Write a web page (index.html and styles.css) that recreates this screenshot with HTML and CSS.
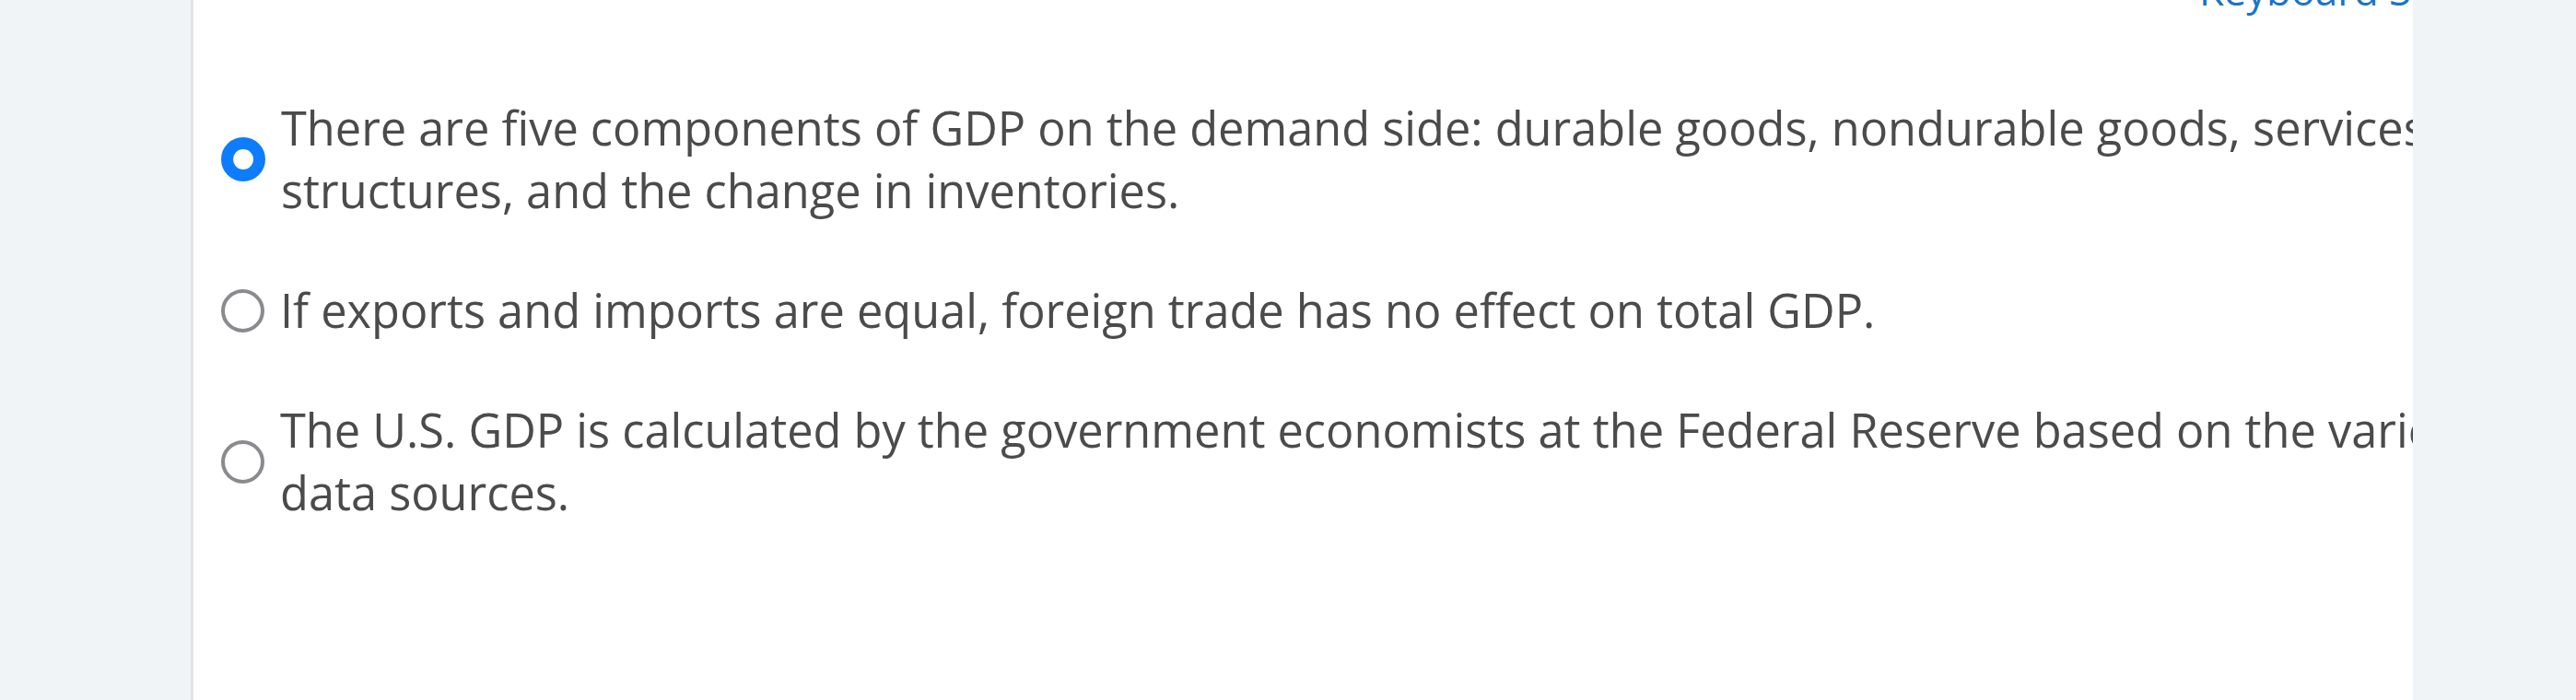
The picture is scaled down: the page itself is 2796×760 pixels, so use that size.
FILE: index.html
```html
<!DOCTYPE html>
<html lang="en">
<head>
<meta charset="utf-8">
<title>Question</title>
<link rel="stylesheet" href="styles.css">
</head>
<body>
<div class="page">
  <div class="side"></div>
  <main class="panel">
    <div class="topbar"><a class="kbd-link" href="#">Keyboard Shortcuts</a></div>
    <div class="options">
      <label class="option">
        <span class="radio radio-checked"></span>
        <span class="option-text">There are five components of GDP on the demand side: durable goods, nondurable goods, services, structures, and the change in inventories.</span>
      </label>
      <label class="option">
        <span class="radio"></span>
        <span class="option-text">If exports and imports are equal, foreign trade has no effect on total GDP.</span>
      </label>
      <label class="option">
        <span class="radio"></span>
        <span class="option-text">The U.S. GDP is calculated by the government economists at the Federal Reserve based on the variety of data sources.</span>
      </label>
    </div>
  </main>
  <div class="side side-right"></div>
</div>
</body>
</html>
```

FILE: styles.css
```css
html, body {
  margin: 0;
  padding: 0;
  background: #f1f4f7;
  height: 100%;
}

body {
  font-family: "Open Sans", "Noto Sans", "Liberation Sans", sans-serif;
  overflow: hidden;
}

.page {
  display: flex;
  height: 760px;
}

.side {
  width: 207px;
  flex: none;
  background: #f1f4f7;
}

.side-right {
  flex: 1;
}

.panel {
  width: 2409px;
  flex: none;
  background: #ffffff;
  border-left: 3px solid #e3e4e6;
  overflow: hidden;
}

.topbar {
  height: 60px;
  margin-top: -41px;
  line-height: 60px;
  padding-left: 2177px;
  white-space: nowrap;
}

.kbd-link {
  font-size: 43.6px;
  color: #1a74c7;
  text-decoration: none;
}

.options {
  width: 2600px;
  margin-top: 86px;
  padding-left: 30px;
  display: flex;
  flex-direction: column;
  gap: 62px;
}

.option {
  display: flex;
  align-items: center;
  gap: 17px;
  cursor: pointer;
}

.radio {
  flex: none;
  width: 47px;
  height: 47px;
  box-sizing: border-box;
  border-radius: 50%;
  border: 4px solid #8b8b8f;
  background: #ffffff;
}

.radio-checked {
  width: 48px;
  height: 48px;
  border: 13px solid #0d7cff;
}

.option-text {
  flex: none;
  width: 2490px;
  font-size: 50.5px;
  line-height: 68px;
  color: #4b4b4b;
}
```
